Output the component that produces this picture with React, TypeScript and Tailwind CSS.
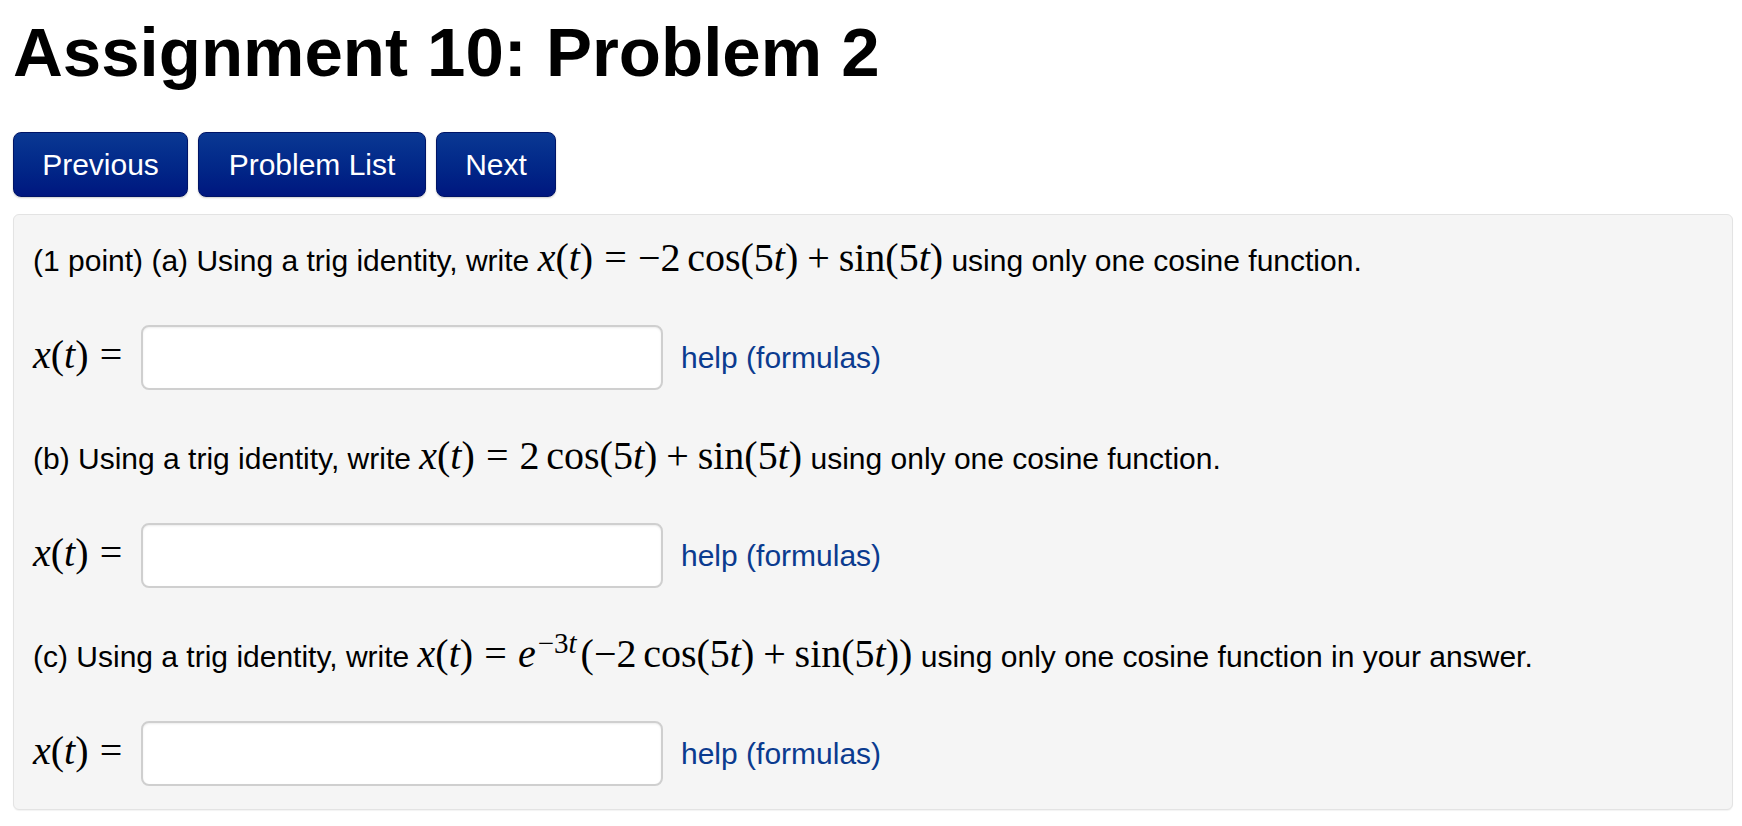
import React from "react";

const sans = "font-['Liberation_Sans',Arial,sans-serif]";
const serif = "font-['Liberation_Serif','Times_New_Roman',serif]";

function M({ children }: { children: React.ReactNode }) {
  return <span className={`${serif} text-[40px] leading-none whitespace-nowrap`}>{children}</span>;
}

function I({ children }: { children: React.ReactNode }) {
  return <i className="italic">{children}</i>;
}

function Rel({ children }: { children: React.ReactNode }) {
  return <span className="mx-[0.278em]">{children}</span>;
}

function Bin({ children }: { children: React.ReactNode }) {
  return <span className="mx-[0.222em]">{children}</span>;
}

function Xt() {
  return (
    <>
      <I>x</I>(<I>t</I>)
    </>
  );
}

function Fn({ name }: { name: string }) {
  return (
    <>
      {name}(5<I>t</I>)
    </>
  );
}

function AnswerRow() {
  return (
    <div className="flex items-center h-[65px] mt-[42px]">
      <span className="w-[108px] shrink-0">
        <M>
          <Xt />
          <Rel>=</Rel>
        </M>
      </span>
      <input
        type="text"
        className="w-[522px] h-[65px] bg-white border-2 border-[#cfcfcf] rounded-[8px] shadow-[inset_0_1px_2px_rgba(0,0,0,0.08)] outline-none px-3"
      />
      <a href="#" className="ml-[18px] text-[#0b3b8f] text-[30px]">
        help (formulas)
      </a>
    </div>
  );
}

function NavButton({ label, w }: { label: string; w: string }) {
  return (
    <button
      className={`${w} h-[65px] rounded-[8px] border border-[#001466] bg-linear-to-b from-[#0b3893] to-[#00167f] text-white text-[30px] shadow-[0_1px_2px_rgba(0,0,0,0.2)]`}
    >
      {label}
    </button>
  );
}

export default function App() {
  return (
    <div className={`${sans} bg-white text-black w-[1742px] h-[826px] px-[13px] pt-[13px]`}>
      <h1 className="text-[69px] font-bold leading-[80px]">Assignment 10: Problem 2</h1>

      <div className="flex gap-[10px] mt-[39px]">
        <NavButton label="Previous" w="w-[175px]" />
        <NavButton label="Problem List" w="w-[228px]" />
        <NavButton label="Next" w="w-[120px]" />
      </div>

      <div className="mt-[17px] w-[1720px] bg-[#f5f5f5] border border-[#e3e3e3] rounded-[6px] shadow-[0_1px_1px_rgba(0,0,0,0.05)] pl-[19px] pt-[23px] pb-[23px] text-[30px]">
        <p className="leading-[44px]">
          (1 point) (a) Using a trig identity, write{" "}
          <M>
            <Xt />
            <Rel>=</Rel>−2<span className="ml-[0.167em]" />
            <Fn name="cos" />
            <Bin>+</Bin>
            <Fn name="sin" />
          </M>{" "}
          using only one cosine function.
        </p>
        <AnswerRow />

        <p className="leading-[44px] mt-[46px]">
          (b) Using a trig identity, write{" "}
          <M>
            <Xt />
            <Rel>=</Rel>2<span className="ml-[0.167em]" />
            <Fn name="cos" />
            <Bin>+</Bin>
            <Fn name="sin" />
          </M>{" "}
          using only one cosine function.
        </p>
        <AnswerRow />

        <p className="leading-[44px] mt-[46px]">
          (c) Using a trig identity, write{" "}
          <M>
            <Xt />
            <Rel>=</Rel>
            <I>e</I>
            <sup className="text-[29px] ml-[2px] mr-[4px]">
              −3<I>t</I>
            </sup>
            (−2<span className="ml-[0.167em]" />
            <Fn name="cos" />
            <Bin>+</Bin>
            <Fn name="sin" />)
          </M>{" "}
          using only one cosine function in your answer.
        </p>
        <AnswerRow />
      </div>
    </div>
  );
}
